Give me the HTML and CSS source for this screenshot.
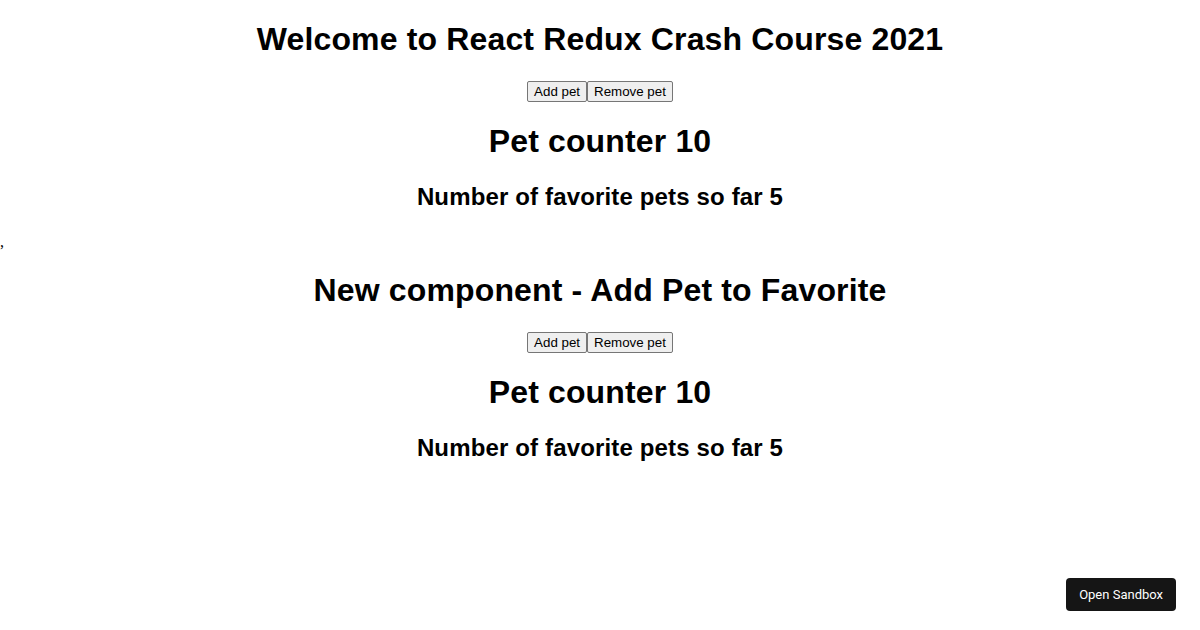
FILE: index.html
```html
<!DOCTYPE html>
<html lang="en">

<head>
    <meta charset="UTF-8">
    <meta name="viewport" content="width=device-width, initial-scale=1.0">
    <link rel="stylesheet" href="styles.css">
</head>

<body>
    <div class="App">
        <h1>Welcome to React Redux Crash Course 2021</h1>
        <div class="controls">
            <button>Add pet</button><button>Remove pet</button>
        </div>
        <h1>Pet counter 10</h1>
        <h2>Number of favorite pets so far 5</h2>
    </div>
    <div class="sep">,</div>
    <div class="App">
        <h1>New component - Add Pet to Favorite</h1>
        <div class="controls">
            <button>Add pet</button><button>Remove pet</button>
        </div>
        <h1>Pet counter 10</h1>
        <h2>Number of favorite pets so far 5</h2>
    </div>
    <a class="sandbox-link">Open Sandbox</a>
</body>

</html>
```

FILE: styles.css
```css
body {
    margin: 0;
    font-family: "Liberation Serif", serif;
}

.App {
    font-family: "Liberation Sans", Arial, sans-serif;
    text-align: center;
}

h1 {
    font-size: 32px;
    margin: 21px 0 21.5px;
    letter-spacing: 0.15px;
}

h2 {
    font-size: 24px;
    margin: 23px 0 21.5px;
    letter-spacing: 0.15px;
}

.controls {
    padding-top: 1.5px;
}

button {
    font-family: "Liberation Sans", Arial, sans-serif;
    font-size: 13.33px;
    color: #000;
    background-color: #efefef;
    border: 1px solid #767676;
    border-radius: 2px;
    padding: 2px 6px;
}

.sep {
    font-size: 16px;
}

.sandbox-link {
    position: fixed;
    right: 24px;
    bottom: 19px;
    background-color: #151515;
    color: #fff;
    font-family: Roboto, "Liberation Sans", sans-serif;
    font-size: 13px;
    padding: 9px 13px;
    border-radius: 4px;
}
```
